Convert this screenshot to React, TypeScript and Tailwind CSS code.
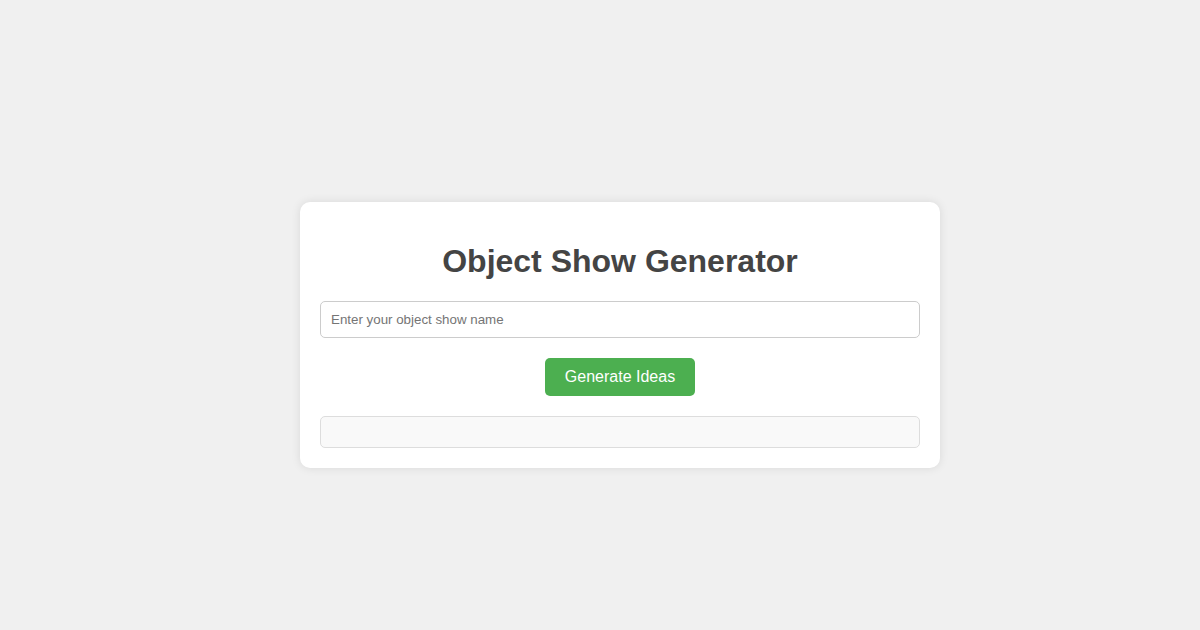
export default function App() {
  return (
    <div className="h-[630px] pl-10 pt-10 flex items-center justify-center bg-[#f0f0f0] font-['Liberation_Sans',Arial,sans-serif]">
      <div className="w-[640px] bg-white rounded-[10px] p-5 shadow-[0_0_10px_rgba(0,0,0,0.1)] flex flex-col items-center">
        <h1 className="my-[21.44px] text-[32px] leading-[37px] font-bold text-[#444]">
          Object Show Generator
        </h1>
        <input
          type="text"
          placeholder="Enter your object show name"
          className="w-full h-[37px] px-[10px] text-[13.333px] border border-[#ccc] rounded-[5px] outline-none placeholder:text-[#757575] text-black"
        />
        <button className="mt-5 h-[38px] px-5 bg-[#4caf50] text-white text-base rounded-[5px]">
          Generate Ideas
        </button>
        <div className="mt-5 w-full h-[32px] bg-[#f9f9f9] border border-[#ddd] rounded-[5px]"></div>
      </div>
    </div>
  );
}
